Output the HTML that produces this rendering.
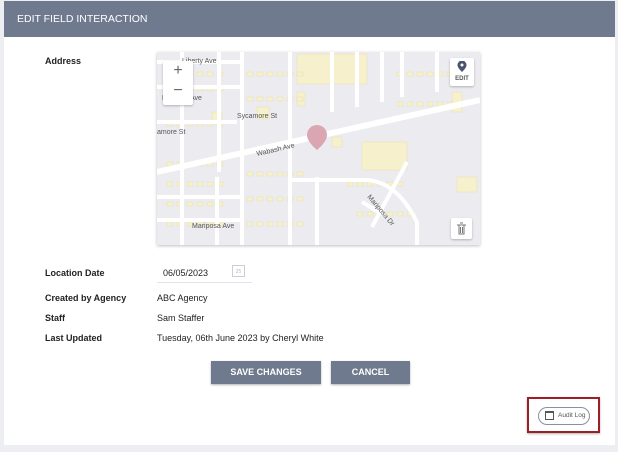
<!DOCTYPE html>
<html><head><style>
*{margin:0;padding:0;box-sizing:border-box}
body{width:618px;height:452px;background:#eceef2;font-family:"Liberation Sans",sans-serif;position:relative;overflow:hidden}
.card{position:absolute;left:4px;top:1px;width:611px;height:444px;background:#fff}
.hdr{position:absolute;left:4px;top:1px;width:611px;height:36px;background:#6f7a8f;color:#fff;font-size:10.5px;line-height:36px;padding-left:13px}
.lbl{position:absolute;left:45px;font-size:9px;font-weight:bold;color:#222}
.val{position:absolute;left:157px;font-size:9px;color:#222}
.btn{position:absolute;top:361px;height:23px;background:#6f7a8f;color:#fff;font-size:9px;font-weight:bold;text-align:center;line-height:23px;box-shadow:0 1px 2px rgba(0,0,0,.3)}
.map{position:absolute;left:157px;top:52px;width:323px;height:193px;background:#ebebf0;overflow:hidden;box-shadow:0 1px 3px rgba(0,0,0,.25)}
.ctl{position:absolute;background:#fff;border-radius:2px;box-shadow:0 1px 2px rgba(0,0,0,.25)}
</style></head><body>
<div class="card"></div>
<div class="hdr">EDIT FIELD INTERACTION</div>
<div class="lbl" style="top:56px">Address</div>
<div class="map">
<svg width="323" height="193" viewBox="0 0 323 193">
<g fill="#f6f0cc" stroke="#e8dfae" stroke-width=".5">
<rect x="140" y="2" width="70" height="30"/><rect x="205" y="90" width="45" height="28"/><rect x="100" y="55" width="12" height="12"/><rect x="55" y="60" width="10" height="12"/><rect x="140" y="40" width="8" height="14"/><rect x="300" y="125" width="20" height="15"/><rect x="295" y="40" width="10" height="20"/><rect x="175" y="85" width="10" height="10"/>
<g id="r"><rect x="10" y="20" width="6" height="4"/><rect x="20" y="20" width="6" height="4"/><rect x="30" y="20" width="6" height="4"/><rect x="40" y="20" width="6" height="4"/><rect x="50" y="20" width="6" height="4"/><rect x="60" y="20" width="6" height="4"/></g>
<use href="#r" y="15"/><use href="#r" y="50"/><use href="#r" x="80" y="0"/><use href="#r" x="80" y="25"/><use href="#r" y="90"/><use href="#r" y="110"/><use href="#r" y="130"/><use href="#r" y="150"/><use href="#r" x="80" y="100"/><use href="#r" x="80" y="125"/><use href="#r" x="80" y="150"/><use href="#r" x="180" y="110"/><use href="#r" x="190" y="140"/><use href="#r" x="230" y="0"/><use href="#r" x="230" y="30"/>
</g>
<g stroke="#fff" fill="none" stroke-width="4">
<path d="M0 120 L323 48" stroke-width="6"/>
<path d="M0 10H85M0 35H85M0 70H80M0 145H85M0 168H85"/>
<path d="M25 0V193M62 0V120M85 0V193M133 0V193M60 125V193M160 125V193"/>
<path d="M133 128H210Q240 130 260 170V193"/>
<path d="M250 110L215 175M230 165L205 150"/>
<path d="M175 0V60M200 0V55M225 0V50M245 0V45M280 0V40"/>
</g>
<g font-size="7" fill="#555" font-family="Liberation Sans"><text x="25" y="11">Liberty Ave</text><text x="5" y="48">Dartland Ave</text><text x="80" y="66">Sycamore St</text><text x="0" y="82">amore St</text><text x="100" y="104" transform="rotate(-13 100 104)">Wabash Ave</text><text x="35" y="176">Mariposa Ave</text><text x="210" y="145" transform="rotate(50 210 145)">Mariposa Dr</text></g>
<path d="M160 98c-7-6-10-11-10-15a10 10 0 0 1 20 0c0 4-3 9-10 15z" fill="#d9a6b1"/>
</svg>
<div class="ctl" style="left:6px;top:9px;width:30px;height:44px;color:#666;font-size:16px;text-align:center;line-height:20px">+<br>−</div>
<div class="ctl" style="left:293px;top:6px;width:24px;height:28px;text-align:center;font-size:6px;font-weight:bold;color:#555;padding-top:3px"><svg width="12" height="13" viewBox="0 0 12 13"><path d="M6 11c-3-3-4.5-5-4.5-7a4.5 4.5 0 0 1 9 0c0 2-1.5 4-4.5 7z" fill="#4a5470"/><circle cx="6" cy="4" r="1.5" fill="#fff"/></svg><br>EDIT</div>
<div class="ctl" style="left:294px;top:166px;width:21px;height:21px"><svg width="21" height="21"><path d="M6 7h9M8 7v9h5V7M9.5 9v6M11.5 9v6M9 5h3" stroke="#777" fill="none"/></svg></div>
</div>
<div class="lbl" style="top:268px">Location Date</div>
<div class="val" style="left:163px;top:268px">06/05/2023</div>
<div style="position:absolute;left:157px;top:282px;width:95px;height:1px;background:#e4e4e8"></div>
<div style="position:absolute;left:232px;top:265px;width:13px;height:12px;border:1px solid #ccd;font-size:5px;color:#bbb;text-align:center;line-height:12px">25</div>
<div class="lbl" style="top:293px">Created by Agency</div><div class="val" style="top:293px">ABC Agency</div>
<div class="lbl" style="top:313px">Staff</div><div class="val" style="top:313px">Sam Staffer</div>
<div class="lbl" style="top:333px">Last Updated</div><div class="val" style="top:333px">Tuesday, 06th June 2023 by Cheryl White</div>
<div class="btn" style="left:211px;width:110px">SAVE CHANGES</div>
<div class="btn" style="left:331px;width:79px">CANCEL</div>
<div style="position:absolute;left:527px;top:397px;width:73px;height:36px;border:2px solid #9a1f27;box-shadow:0 1px 2px rgba(0,0,0,.3)"></div>
<div style="position:absolute;left:538px;top:407px;width:52px;height:18px;border:1px solid #8890a3;border-radius:9px;font-size:6.5px;color:#555;line-height:16px;padding-left:19px">Audit Log</div>
<div style="position:absolute;left:545px;top:411px;width:9px;height:9px;border:1px solid #555;border-top-width:2px"></div>
</body></html>
